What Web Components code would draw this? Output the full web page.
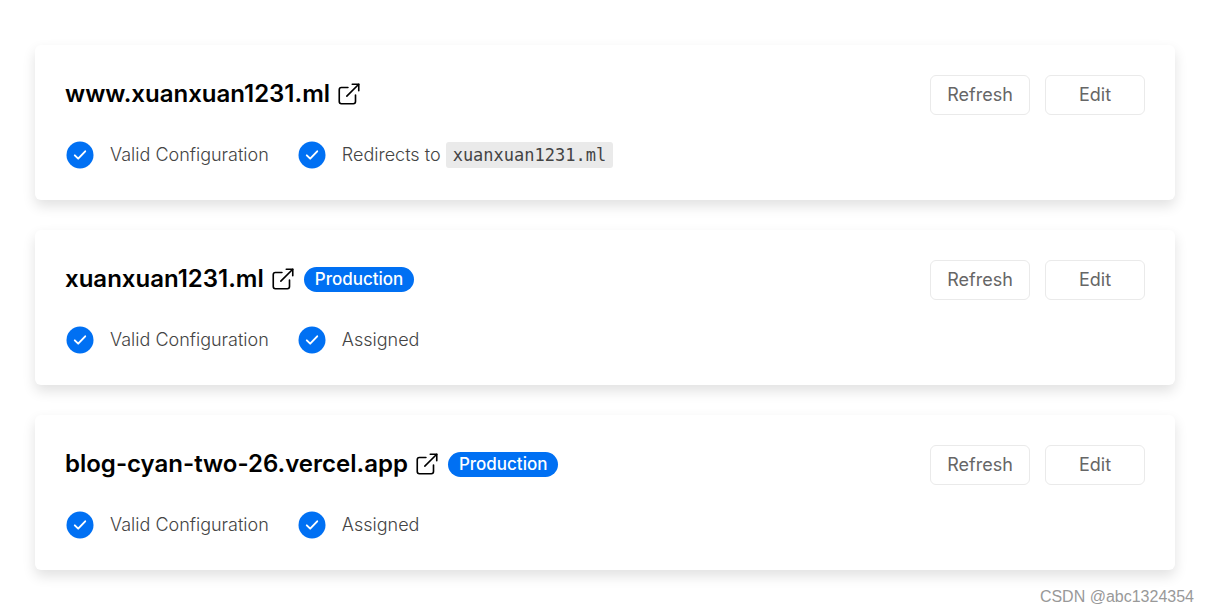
<!DOCTYPE html>
<html lang="en">
<head>
<meta charset="utf-8">
<meta name="viewport" content="width=device-width, initial-scale=1">
<title>Domains</title>
<style>
  body {
    margin: 0;
    background: #fff;
    color: #444;
    font: 18px/26px Inter, "Liberation Sans", sans-serif;
  }
</style>
</head>
<body>
<domain-list>
  <domain-card name="www.xuanxuan1231.ml">
    <domain-status>Valid Configuration</domain-status>
    <domain-status>Redirects to <domain-code>xuanxuan1231.ml</domain-code></domain-status>
  </domain-card>
  <domain-card name="xuanxuan1231.ml">
    <domain-badge slot="badge">Production</domain-badge>
    <domain-status>Valid Configuration</domain-status>
    <domain-status>Assigned</domain-status>
  </domain-card>
  <domain-card name="blog-cyan-two-26.vercel.app">
    <domain-badge slot="badge">Production</domain-badge>
    <domain-status>Valid Configuration</domain-status>
    <domain-status>Assigned</domain-status>
  </domain-card>
  <page-credit slot="footer">CSDN @abc1324354</page-credit>
</domain-list>

<script>
  window.customElements.define(
    'domain-list',
    class DomainList extends HTMLElement {
      constructor() {
        super();
        const shadowRoot = this.attachShadow({mode: 'open'});
        shadowRoot.innerHTML = `
        <style>
        :host {
            display: block;
        }
        main {
            display: flex;
            flex-direction: column;
            gap: 30px;
            padding: 45px 34px 16px 35px;
        }
        </style>
        <main><slot></slot></main>
        <slot name="footer"></slot>
        `;
      }
    }
  );

  window.customElements.define(
    'domain-card',
    class DomainCard extends HTMLElement {
      constructor() {
        super();
        const shadowRoot = this.attachShadow({mode: 'open'});
        shadowRoot.innerHTML = `
        <style>
        :host {
            display: block;
            padding: 30px;
            border-radius: 6px;
            background: #fff;
            box-shadow: 0 6px 13px rgba(0, 0, 0, .12);
        }
        header {
            display: flex;
            align-items: flex-start;
            justify-content: space-between;
            min-height: 40px;
        }
        .title, .actions, .statuses, a {
            display: flex;
            align-items: center;
        }
        .title {
            gap: 8px;
        }
        h2 {
            margin: 0;
            font-size: 24px;
            font-weight: 600;
            line-height: 38px;
        }
        a {
            gap: 6px;
            color: #000;
            text-decoration: none;
        }
        svg {
            width: 26px;
            height: 26px;
            fill: none;
            stroke: currentColor;
            stroke-width: 1.5;
            stroke-linecap: round;
            stroke-linejoin: round;
        }
        .actions {
            gap: 15px;
        }
        .statuses {
            flex-wrap: wrap;
            gap: 28px;
            margin-top: 25px;
        }
        </style>
        <header>
            <div class="title">
                <h2><a href="#"><span class="name"></span>
                    <svg viewBox="0 0 24 24" aria-hidden="true">
                        <path d="M18 13v6a2 2 0 0 1-2 2H5a2 2 0 0 1-2-2V8a2 2 0 0 1 2-2h6"/>
                        <path d="M15 3h6v6"/>
                        <path d="M10 14 21 3"/>
                    </svg></a></h2>
                <slot name="badge"></slot>
            </div>
            <div class="actions">
                <domain-button>Refresh</domain-button>
                <domain-button>Edit</domain-button>
            </div>
        </header>
        <div class="statuses"><slot></slot></div>
        `;
      }

      connectedCallback() {
        const name = this.getAttribute('name');
        this.shadowRoot.querySelector('.name').textContent = name;
        this.shadowRoot.querySelector('a').href = '//' + name;
      }
    }
  );

  window.customElements.define(
    'domain-button',
    class DomainButton extends HTMLElement {
      constructor() {
        super();
        const shadowRoot = this.attachShadow({mode: 'open'});
        shadowRoot.innerHTML = `
        <style>
        :host {
            display: block;
        }
        button {
            min-width: 100px;
            height: 40px;
            padding: 0 15px;
            border: 1px solid #eaeaea;
            border-radius: 6px;
            background: #fff;
            color: #666;
            font: inherit;
            cursor: pointer;
        }
        button:hover {
            border-color: #000;
            color: #000;
        }
        </style>
        <button type="button"><slot></slot></button>
        `;
      }
    }
  );

  window.customElements.define(
    'domain-badge',
    class DomainBadge extends HTMLElement {
      constructor() {
        super();
        const shadowRoot = this.attachShadow({mode: 'open'});
        shadowRoot.innerHTML = `
        <style>
        :host {
            display: block;
            padding: 0 11px;
            border-radius: 13px;
            background: #0070f3;
            color: #fff;
            font-size: 17px;
            font-weight: 500;
            line-height: 25px;
        }
        </style>
        <slot></slot>
        `;
      }
    }
  );

  window.customElements.define(
    'domain-status',
    class DomainStatus extends HTMLElement {
      constructor() {
        super();
        const shadowRoot = this.attachShadow({mode: 'open'});
        shadowRoot.innerHTML = `
        <style>
        :host {
            display: flex;
            align-items: center;
            gap: 15px;
            font-weight: 300;
        }
        svg {
            width: 30px;
            height: 30px;
        }
        </style>
        <svg viewBox="0 0 30 30" aria-hidden="true">
            <circle cx="15" cy="15" r="13.5" fill="#0070f3"/>
            <path d="M9.8 15.3l3.4 3.4 7-7.4" fill="none" stroke="#fff" stroke-width="1.9" stroke-linecap="round" stroke-linejoin="round"/>
        </svg>
        <span><slot></slot></span>
        `;
      }
    }
  );

  window.customElements.define(
    'domain-code',
    class DomainCode extends HTMLElement {
      constructor() {
        super();
        const shadowRoot = this.attachShadow({mode: 'open'});
        shadowRoot.innerHTML = `
        <style>
        :host {
            display: inline-block;
            padding: 0 7px;
            border-radius: 3px;
            background: #eaeaea;
            font: 400 17px/26px "DejaVu Sans Mono", monospace;
        }
        code {
            font: inherit;
        }
        </style>
        <code><slot></slot></code>
        `;
      }
    }
  );

  window.customElements.define(
    'page-credit',
    class PageCredit extends HTMLElement {
      constructor() {
        super();
        const shadowRoot = this.attachShadow({mode: 'open'});
        shadowRoot.innerHTML = `
        <style>
        :host {
            display: block;
            padding: 0 15px;
            color: #999;
            font: 16px/22px "Liberation Sans", sans-serif;
            text-align: right;
        }
        </style>
        <slot></slot>
        `;
      }
    }
  );
</script>
</body>
</html>
